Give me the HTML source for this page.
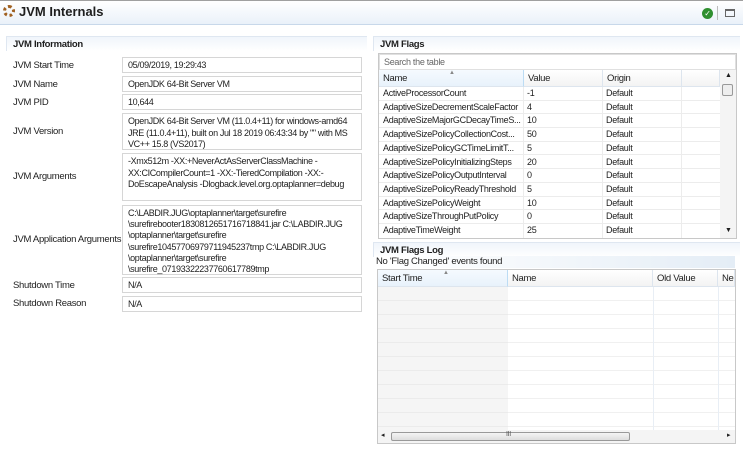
<!DOCTYPE html>
<html><head><style>
*{box-sizing:border-box;margin:0;padding:0}
body{width:743px;height:453px;background:#fff;font-family:"Liberation Sans",sans-serif;font-size:9.5px;letter-spacing:-0.3px;color:#1e1e1e;position:relative;overflow:hidden}
.a{position:absolute;white-space:nowrap}
.title{left:0;top:0;width:743px;height:25px;background:linear-gradient(#fff,#eaf1f9);border-bottom:1px solid #c8d8ea;border-top:1px solid #a0a0a0}
.sec{position:absolute;height:15px;background:linear-gradient(#f0f5fb,#fff);border-top:1px solid #dfe7f1;border-left:1px solid #dfe7f1;font-weight:bold;font-size:9.5px;padding:2px 6px}
.f{position:absolute;left:122px;width:240px;border:1px solid #d6d6d6;padding:2px 5px 0;line-height:11.6px;white-space:nowrap;font-size:9px;letter-spacing:-0.35px}
.l{position:absolute;left:13px;font-size:9.5px}
.th{position:absolute;height:17px;background:linear-gradient(#fff,#f3f3f3);border-right:1px solid #dde5ee;border-bottom:1px solid #dde5ee;padding:3px 4px;font-size:9.5px}
.r{position:absolute;left:379px;width:341px;height:13.7px;border-bottom:1px solid #ececec;font-size:9px}
.r span{position:absolute;top:1px;white-space:nowrap;padding-right:2px}
.r span:first-child{width:142px;overflow:hidden}
</style></head><body>
<div class="a title"></div>
<div class="a" style="left:3px;top:5px;width:12px;height:12px;border-radius:50%;border:3px dotted #a06020"></div>
<div class="a" style="left:19px;top:4px;font-size:13px;font-weight:bold;letter-spacing:0">JVM Internals</div>
<div class="a" style="left:702px;top:8px;width:11px;height:11px;border-radius:50%;background:#2f8f2f;color:#fff;font-size:8px;text-align:center;line-height:11px">✓</div>
<div class="a" style="left:717px;top:6px;width:1px;height:14px;background:#bbb"></div>
<div class="a" style="left:725px;top:9px;width:10px;height:8px;border:1px solid #666;border-top-width:2px"></div>

<div class="sec" style="left:6px;top:36px;width:361px">JVM Information</div>
<div class="l" style="top:60px">JVM Start Time</div><div class="f" style="top:57px;height:16px">05/09/2019, 19:29:43</div>
<div class="l" style="top:79px">JVM Name</div><div class="f" style="top:76px;height:16px">OpenJDK 64-Bit Server VM</div>
<div class="l" style="top:97px">JVM PID</div><div class="f" style="top:94px;height:16px">10,644</div>
<div class="l" style="top:126px">JVM Version</div><div class="f" style="top:113px;height:37px">OpenJDK 64-Bit Server VM (11.0.4+11) for windows-amd64<br>JRE (11.0.4+11), built on Jul 18 2019 06:43:34 by "" with MS<br>VC++ 15.8 (VS2017)</div>
<div class="l" style="top:171px">JVM Arguments</div><div class="f" style="top:153px;height:48px">-Xmx512m -XX:+NeverActAsServerClassMachine -<br>XX:CICompilerCount=1 -XX:-TieredCompilation -XX:-<br>DoEscapeAnalysis -Dlogback.level.org.optaplanner=debug</div>
<div class="l" style="top:234px">JVM Application Arguments</div><div class="f" style="top:205px;height:70px;line-height:11.2px">C:\LABDIR.JUG\optaplanner\target\surefire<br>\surefirebooter1830812651716718841.jar C:\LABDIR.JUG<br>\optaplanner\target\surefire<br>\surefire10457706979711945237tmp C:\LABDIR.JUG<br>\optaplanner\target\surefire<br>\surefire_07193322237760617789tmp</div>
<div class="l" style="top:280px">Shutdown Time</div><div class="f" style="top:277px;height:16px">N/A</div>
<div class="l" style="top:298px">Shutdown Reason</div><div class="f" style="top:296px;height:16px">N/A</div>

<div class="sec" style="left:373px;top:36px;width:367px">JVM Flags</div>
<div class="a" style="left:378px;top:53px;width:359px;height:186px;border:1px solid #c8c8c8"></div>
<div class="a" style="left:379px;top:54px;width:357px;height:16px;border:1px solid #e0e0e0;color:#666;padding:2px 4px;font-size:9px">Search the table</div>
<div class="th" style="left:379px;top:70px;width:145px;background:linear-gradient(#f5faff,#e8f2fb);border-right-color:#bcdcf4">Name</div>
<div class="a" style="left:449px;top:70px;font-size:6px;color:#888">▲</div>
<div class="th" style="left:524px;top:70px;width:79px">Value</div>
<div class="th" style="left:603px;top:70px;width:79px">Origin</div>
<div class="th" style="left:682px;top:70px;width:38px"></div>
<div class="a" style="left:720px;top:70px;width:16px;height:168px;background:#f4f4f4"></div>
<div class="a" style="left:722px;top:84px;width:11px;height:12px;border:1px solid #999;border-radius:2px;background:#eee"></div>
<div class="a" style="left:725px;top:72px;font-size:7px">▲</div><div class="a" style="left:725px;top:227px;font-size:7px">▼</div>
<div class="a" style="left:523px;top:87px;width:1px;height:151px;background:#ececec"></div>
<div class="a" style="left:602px;top:87px;width:1px;height:151px;background:#ececec"></div>
<div class="a" style="left:681px;top:87px;width:1px;height:151px;background:#ececec"></div>
<div class="r" style="top:87px"><span style="left:4px">ActiveProcessorCount</span><span style="left:148px">-1</span><span style="left:227px">Default</span></div>
<div class="r" style="top:100.7px"><span style="left:4px">AdaptiveSizeDecrementScaleFactor</span><span style="left:148px">4</span><span style="left:227px">Default</span></div>
<div class="r" style="top:114.4px"><span style="left:4px">AdaptiveSizeMajorGCDecayTimeS...</span><span style="left:148px">10</span><span style="left:227px">Default</span></div>
<div class="r" style="top:128.1px"><span style="left:4px">AdaptiveSizePolicyCollectionCost...</span><span style="left:148px">50</span><span style="left:227px">Default</span></div>
<div class="r" style="top:141.8px"><span style="left:4px">AdaptiveSizePolicyGCTimeLimitT...</span><span style="left:148px">5</span><span style="left:227px">Default</span></div>
<div class="r" style="top:155.5px"><span style="left:4px">AdaptiveSizePolicyInitializingSteps</span><span style="left:148px">20</span><span style="left:227px">Default</span></div>
<div class="r" style="top:169.2px"><span style="left:4px">AdaptiveSizePolicyOutputInterval</span><span style="left:148px">0</span><span style="left:227px">Default</span></div>
<div class="r" style="top:182.9px"><span style="left:4px">AdaptiveSizePolicyReadyThreshold</span><span style="left:148px">5</span><span style="left:227px">Default</span></div>
<div class="r" style="top:196.6px"><span style="left:4px">AdaptiveSizePolicyWeight</span><span style="left:148px">10</span><span style="left:227px">Default</span></div>
<div class="r" style="top:210.3px"><span style="left:4px">AdaptiveSizeThroughPutPolicy</span><span style="left:148px">0</span><span style="left:227px">Default</span></div>
<div class="r" style="top:224px;border:0"><span style="left:4px">AdaptiveTimeWeight</span><span style="left:148px">25</span><span style="left:227px">Default</span></div>

<div class="sec" style="left:373px;top:242px;width:367px">JVM Flags Log</div>
<div class="a" style="left:377px;top:256px;width:358px;height:12px;background:linear-gradient(90deg,#fff 5%,#e4edf6);"></div>
<div class="a" style="left:376px;top:256px;font-size:9.5px">No 'Flag Changed' events found</div>
<div class="a" style="left:377px;top:269px;width:359px;height:175px;border:1px solid #c8c8c8"></div>
<div class="a" style="left:378px;top:287px;width:130px;height:143px;background:#f5f5f5;background-image:repeating-linear-gradient(#f5f5f5 0 13px,#ebebeb 13px 14px)"></div>
<div class="a" style="left:508px;top:287px;width:227px;height:143px;background-image:repeating-linear-gradient(#fff 0 13px,#f0f0f0 13px 14px)"></div>
<div class="th" style="left:378px;top:270px;width:130px;background:linear-gradient(#f5faff,#e8f2fb);border-right-color:#bcdcf4">Start Time</div>
<div class="a" style="left:443px;top:270px;font-size:6px;color:#888">▲</div>
<div class="th" style="left:508px;top:270px;width:145px">Name</div>
<div class="th" style="left:653px;top:270px;width:65px">Old Value</div>
<div class="th" style="left:718px;top:270px;width:17px;overflow:hidden">Ne</div>
<div class="a" style="left:653px;top:287px;width:1px;height:143px;background:#e8eef5"></div>
<div class="a" style="left:718px;top:287px;width:1px;height:143px;background:#e8eef5"></div>
<div class="a" style="left:378px;top:430px;width:357px;height:13px;background:#f4f4f4"></div>
<div class="a" style="left:391px;top:432px;width:239px;height:9px;border:1px solid #999;border-radius:2px;background:linear-gradient(#f4f4f4,#ddd)"></div>
<div class="a" style="left:506px;top:431px;font-size:7px;color:#555">III</div>
<div class="a" style="left:381px;top:431px;font-size:7px">◂</div><div class="a" style="left:727px;top:431px;font-size:7px">▸</div>
</body></html>
